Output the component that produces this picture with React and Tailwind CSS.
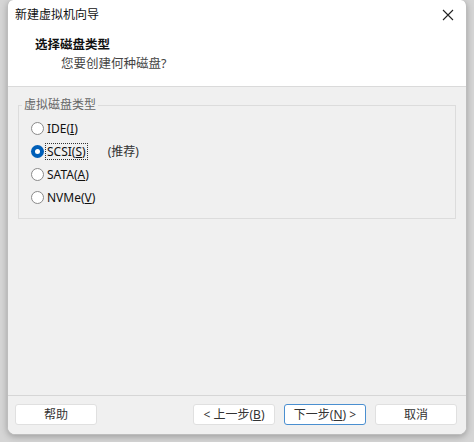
import React, { useState } from 'react';

const font = { fontFamily: '"Noto Sans", "Noto Sans CJK SC", sans-serif' };

const options = [
  { id: 'ide', label: 'IDE(', key: 'I' },
  { id: 'scsi', label: 'SCSI(', key: 'S', note: '(推荐)' },
  { id: 'sata', label: 'SATA(', key: 'A' },
  { id: 'nvme', label: 'NVMe(', key: 'V' },
];

function Radio({ checked }) {
  return checked ? (
    <span className="w-[13px] h-[13px] rounded-full bg-[#005fb8] flex items-center justify-center shrink-0">
      <span className="w-[5px] h-[5px] rounded-full bg-white" />
    </span>
  ) : (
    <span className="w-[13px] h-[13px] rounded-full border border-[#8a8a8a] bg-white shrink-0" />
  );
}

function Btn({ children, focused }) {
  return (
    <button
      className={`w-[82px] h-[21px] rounded-[3px] bg-white text-[12px] text-[#333] leading-none flex items-center justify-center ${
        focused ? 'border border-[#4a8fd0]' : 'border border-[#e0e0e0]'
      }`}
    >
      {children}
    </button>
  );
}

export default function App() {
  const [selected, setSelected] = useState('scsi');

  return (
    <div className="w-[474px] h-[442px] bg-[#d5d5d5] px-[7px]" style={font}>
      <div className="w-[460px] h-[435px] bg-white rounded-b-[8px] rounded-t-[6px] border-x border-b border-[#bdbdbd] shadow-[0_2px_6px_rgba(0,0,0,0.25)] flex flex-col overflow-hidden">
        {/* title bar */}
        <div className="h-[30px] flex items-center justify-between pl-[7px] pr-[10px] shrink-0">
          <span className="text-[12px] text-[#111]">新建虚拟机向导</span>
          <svg width="14" height="14" viewBox="0 0 14 14" className="mr-[1px]">
            <path d="M2 2 L12 12 M12 2 L2 12" stroke="#222" strokeWidth="1.1" fill="none" />
          </svg>
        </div>

        {/* header */}
        <div className="h-[56px] pl-[27px] pt-[6px] shrink-0">
          <div className="text-[12.5px] font-bold text-[#111] leading-[18px]">选择磁盘类型</div>
          <div className="text-[12.5px] text-[#444] leading-[18px] pl-[26px] mt-[1px]">您要创建何种磁盘?</div>
        </div>

        {/* body */}
        <div className="flex-1 bg-[#f0f0f0] border-t border-[#dadada] pt-[10px] px-[10px]">
          <fieldset className="border border-[#dcdcdc] h-[122px]">
            <legend className="ml-[3px] px-[2px] text-[12px] text-[#666] leading-[16px]">虚拟磁盘类型</legend>
            <div className="flex flex-col pl-[12px] pt-[4px]">
              {options.map((o) => (
                <label
                  key={o.id}
                  className="h-[23px] flex items-center gap-[1px] cursor-default"
                  onClick={() => setSelected(o.id)}
                >
                  <Radio checked={selected === o.id} />
                  <span
                    className={`text-[12px] text-[#111] leading-[15px] px-[1px] ${
                      selected === o.id ? 'border border-dotted border-[#333]' : 'border border-transparent'
                    }`}
                  >
                    {o.label}
                    <span className="underline">{o.key}</span>)
                  </span>
                  {o.note && <span className="ml-[19px] text-[12px] text-[#333]">{o.note}</span>}
                </label>
              ))}
            </div>
          </fieldset>
        </div>

        {/* footer */}
        <div className="h-[39px] bg-[#f0f0f0] border-t border-[#d6d6d6] flex items-center pl-[7px] pr-[9px] shrink-0 pb-[1px]">
          <Btn>帮助</Btn>
          <div className="flex-1" />
          <div className="flex gap-[9px]">
            <Btn>
              &lt; 上一步(<span className="underline">B</span>)
            </Btn>
            <Btn focused>
              下一步(<span className="underline">N</span>) &gt;
            </Btn>
            <Btn>取消</Btn>
          </div>
        </div>
      </div>
    </div>
  );
}
